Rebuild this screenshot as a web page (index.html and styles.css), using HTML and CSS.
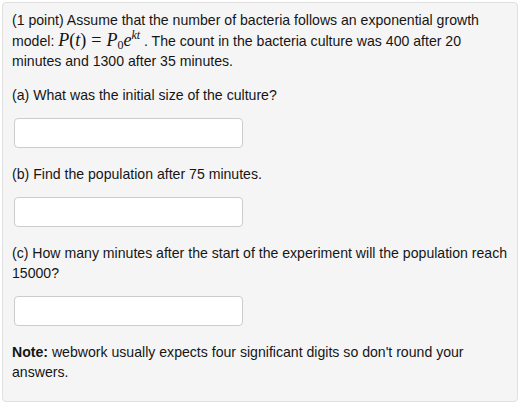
FILE: index.html
```html
<!DOCTYPE html>
<html>
<head>
<meta charset="utf-8">
<link rel="stylesheet" href="styles.css">
</head>
<body>
<div class="problem">
  <p class="para">(1 point) Assume that the number of bacteria follows an exponential growth model: <span class="math"><i>P</i>(<i>t</i>)<span class="eq">=</span><i>P</i><sub>0</sub><i>e</i><sup><i>kt</i></sup></span> . The count in the bacteria culture was 400 after 20 minutes and 1300 after 35 minutes.</p>
  <p class="para">(a) What was the initial size of the culture?</p>
  <input class="answer" type="text">
  <p class="para">(b) Find the population after 75 minutes.</p>
  <input class="answer" type="text">
  <p class="para">(c) How many minutes after the start of the experiment will the population reach 15000?</p>
  <input class="answer" type="text">
  <p class="para"><strong class="label">Note:</strong> webwork usually expects four significant digits so don't round your answers.</p>
</div>
</body>
</html>
```
FILE: styles.css
```css
html, body {
  margin: 0;
  padding: 0;
  background: #ffffff;
}
body {
  padding: 2px 6px 5px 2px;
}
.problem {
  box-sizing: border-box;
  height: 400px;
  background: #f5f5f5;
  border: 1px solid #e0e0e0;
  border-radius: 4px;
  padding: 7px 9px;
  font-family: "Liberation Sans", Arial, Helvetica, sans-serif;
  font-size: 14.1px;
  line-height: 20px;
  color: #151515;
}
.para {
  margin: 0 0 13px 0;
}
.para:first-child {
  margin-bottom: 14px;
}
.label {
  font-weight: bold;
}
.math {
  display: inline-block;
  font-family: "Liberation Serif", "Times New Roman", serif;
  font-size: 18px;
  line-height: 20px;
  height: 20px;
  white-space: nowrap;
  color: #111;
}
.math .eq {
  padding: 0 5px;
}
.math sub {
  font-size: 12px;
  vertical-align: -3px;
  line-height: 0;
}
.math sup {
  font-size: 12px;
  vertical-align: 7px;
  line-height: 0;
}
.answer {
  display: block;
  box-sizing: border-box;
  width: 229px;
  height: 30px;
  margin: 0 0 16px 2px;
  background: #ffffff;
  border: 1px solid #cccccc;
  border-radius: 4px;
  padding: 4px 6px;
  font: 14px "Liberation Sans", Arial, sans-serif;
}
```
